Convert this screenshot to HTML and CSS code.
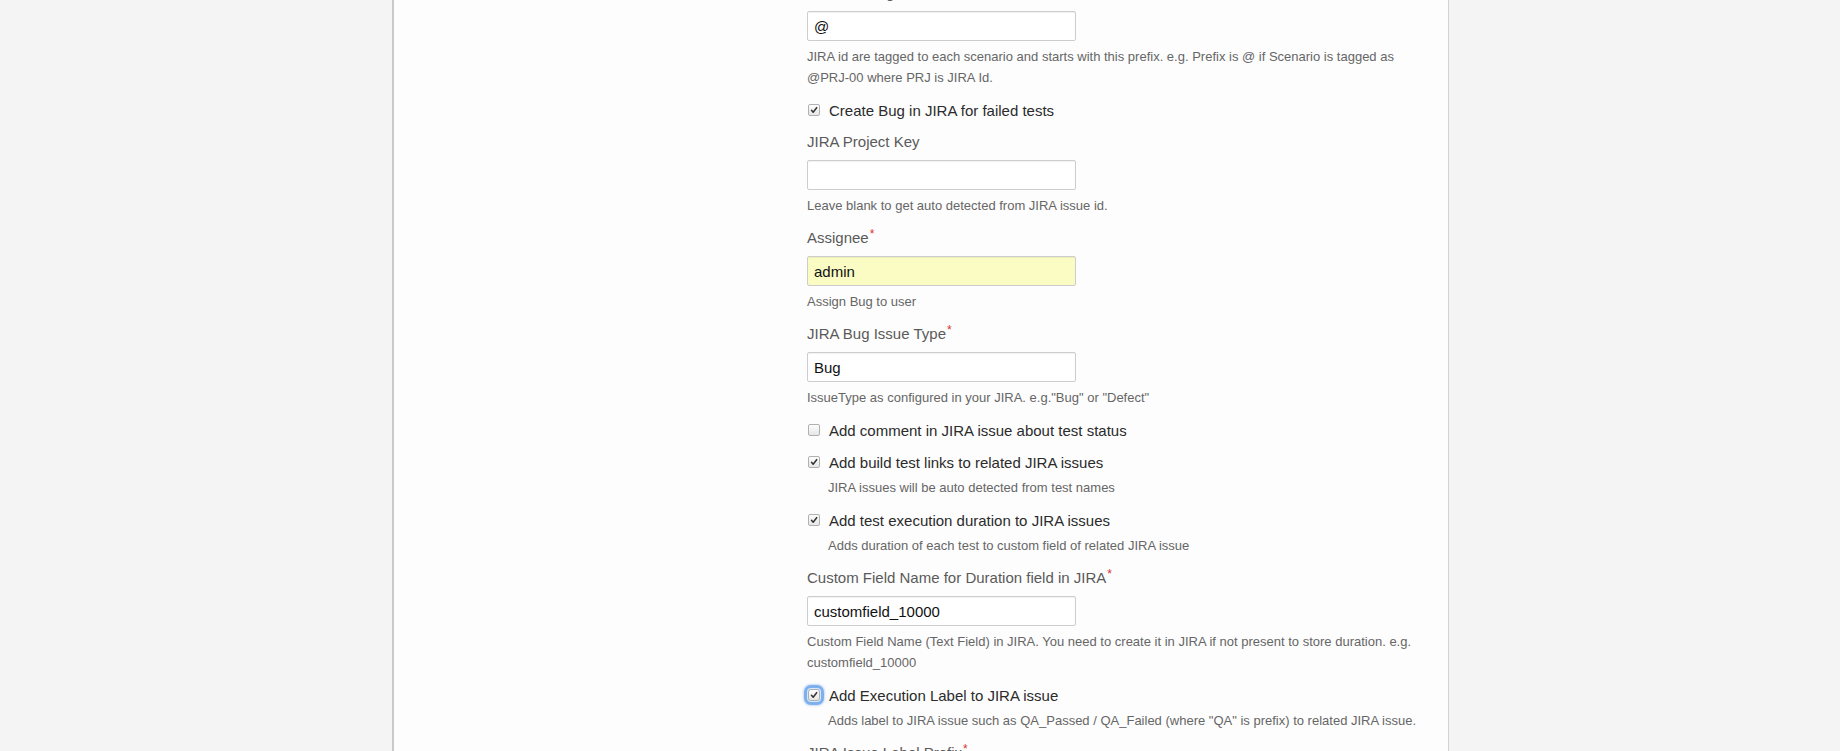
FILE: index.html
```html
<!DOCTYPE html>
<html lang="en">
<head>
    <meta charset="UTF-8">
    <title>Configure - JIRA Bug Options</title>
    <link rel="stylesheet" href="styles.css">
</head>
<body>

<div class="page">
    <div class="config">
        <div class="form">

            <div class="entry">
                <div class="label">Scenario Tag Prefix</div>
                <input type="text" class="field" value="@">
                <div class="help">JIRA id are tagged to each scenario and starts with this prefix. e.g. Prefix is @ if Scenario is tagged as @PRJ-00 where PRJ is JIRA Id.</div>
            </div>

            <div class="cb-entry">
                <label class="cb-row"><span class="cb checked"><svg viewBox="0 0 12 12"><path d="M3 6.3 L5 8.6 L9.2 3.2" /></svg></span>Create Bug in JIRA for failed tests</label>
            </div>

            <div class="entry">
                <div class="label">JIRA Project Key</div>
                <input type="text" class="field" value="">
                <div class="help">Leave blank to get auto detected from JIRA issue id.</div>
            </div>

            <div class="entry">
                <div class="label">Assignee<span class="req">*</span></div>
                <input type="text" class="field filled" value="admin">
                <div class="help">Assign Bug to user</div>
            </div>

            <div class="entry">
                <div class="label">JIRA Bug Issue Type<span class="req">*</span></div>
                <input type="text" class="field" value="Bug">
                <div class="help">IssueType as configured in your JIRA. e.g."Bug" or "Defect"</div>
            </div>

            <div class="cb-entry">
                <label class="cb-row"><span class="cb"></span>Add comment in JIRA issue about test status</label>
            </div>

            <div class="cb-entry">
                <label class="cb-row"><span class="cb checked"><svg viewBox="0 0 12 12"><path d="M3 6.3 L5 8.6 L9.2 3.2" /></svg></span>Add build test links to related JIRA issues</label>
                <div class="help indent">JIRA issues will be auto detected from test names</div>
            </div>

            <div class="cb-entry">
                <label class="cb-row"><span class="cb checked"><svg viewBox="0 0 12 12"><path d="M3 6.3 L5 8.6 L9.2 3.2" /></svg></span>Add test execution duration to JIRA issues</label>
                <div class="help indent">Adds duration of each test to custom field of related JIRA issue</div>
            </div>

            <div class="entry">
                <div class="label">Custom Field Name for Duration field in JIRA<span class="req">*</span></div>
                <input type="text" class="field" value="customfield_10000">
                <div class="help">Custom Field Name (Text Field) in JIRA. You need to create it in JIRA if not present to store duration. e.g. customfield_10000</div>
            </div>

            <div class="cb-entry">
                <label class="cb-row"><span class="cb checked focus"><svg viewBox="0 0 12 12"><path d="M3 6.3 L5 8.6 L9.2 3.2" /></svg></span>Add Execution Label to JIRA issue</label>
                <div class="help indent">Adds label to JIRA issue such as QA_Passed / QA_Failed (where "QA" is prefix) to related JIRA issue.</div>
            </div>

            <div class="entry">
                <div class="label">JIRA Issue Label Prefix<span class="req">*</span></div>
                <input type="text" class="field" value="QA">
            </div>

        </div>
    </div>
</div>

</body>
</html>
```

FILE: styles.css
```css
html, body {
    height: 100%;
}
body {
    margin: 0;
    background-color: #f4f4f4;
    font-family: "Liberation Sans", Helvetica, Arial, sans-serif;
    overflow: hidden;
}
.page {
    height: 751px;
    overflow: hidden;
}
.config {
    display: flow-root;
    margin-left: 392px;
    width: 1057px;
    height: 100%;
    background-color: #fdfdfd;
    border-left: 2px solid #c9c9c9;
    border-right: 1px solid #d2d2d2;
    padding: 0 20px 0 413px;
    box-sizing: border-box;
}
.form {
    display: flex;
    flex-direction: column;
    gap: 12px;
    margin-top: -17px;
}
.label {
    font-size: 15px;
    line-height: 20px;
    color: #5a5a5a;
    margin-bottom: 8px;
}
.req {
    color: #d9322b;
    font-size: 12px;
    vertical-align: top;
    line-height: 12px;
    margin-left: 1px;
}
.field {
    display: block;
    width: 269px;
    height: 30px;
    box-sizing: border-box;
    margin: 0;
    padding: 0 6px;
    border: 1px solid #cdcdcd;
    border-radius: 2px;
    box-shadow: inset 0 1px 1px rgba(0, 0, 0, 0.06);
    background-color: #fff;
    font-family: "Liberation Sans", Helvetica, Arial, sans-serif;
    font-size: 15px;
    color: #111;
    outline: none;
}
.field.filled {
    background-color: #fafcc4;
}
.help {
    font-size: 13px;
    line-height: 21px;
    color: #666;
    margin-top: 5px;
}
.help.indent {
    margin-left: 21px;
}
.cb-row {
    display: flex;
    align-items: center;
    height: 20px;
    font-size: 15px;
    color: #2b2b2b;
}
.cb {
    width: 12px;
    height: 12px;
    margin: 0 9px 0 1px;
    border: 1px solid #b0b0b0;
    border-radius: 2px;
    background: linear-gradient(#fdfdfd, #e6e6e6);
    box-sizing: border-box;
    flex-shrink: 0;
    display: flex;
}
.cb svg {
    width: 100%;
    height: 100%;
}
.cb path {
    fill: none;
    stroke: #333;
    stroke-width: 1.8;
    stroke-linecap: round;
    stroke-linejoin: round;
}
.cb.focus {
    box-shadow: 0 0 0 1px #d6e6fb, 0 0 0 4px #7fb0ee, 0 0 2px 5px rgba(127, 176, 238, 0.4);
    border-radius: 3px;
}
```
